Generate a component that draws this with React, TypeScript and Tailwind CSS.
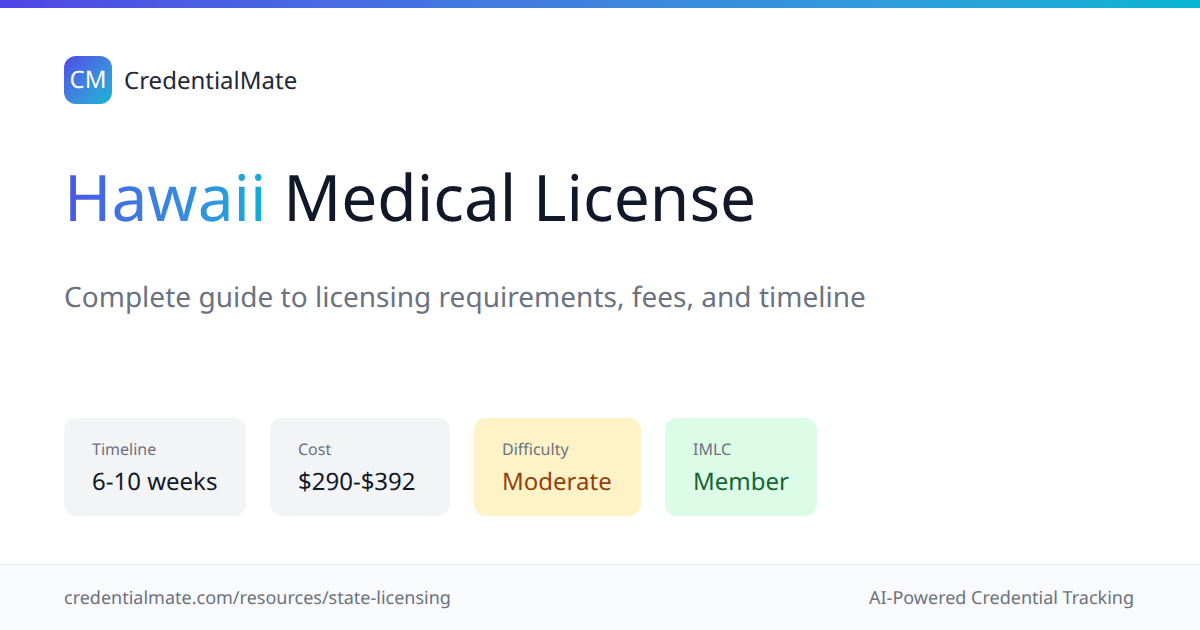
const stats = [
  { label: 'Timeline', value: '6-10 weeks', bg: 'bg-[#f3f4f6]', color: 'text-[#111827]', width: 'w-[182px]' },
  { label: 'Cost', value: '$290-$392', bg: 'bg-[#f3f4f6]', color: 'text-[#111827]', width: 'w-[180px]' },
  { label: 'Difficulty', value: 'Moderate', bg: 'bg-[#fef3c7]', color: 'text-[#92400e]', width: 'w-[167px]' },
  { label: 'IMLC', value: 'Member', bg: 'bg-[#dcfce7]', color: 'text-[#166534]', width: 'w-[152px]' },
];

export default function App() {
  return (
    <div className="w-[1200px] h-[630px] bg-white flex flex-col overflow-hidden antialiased [text-rendering:geometricPrecision] font-['Noto_Sans',sans-serif]">
      <div className="h-2 bg-gradient-to-r from-[#4f46e5] to-[#06b6d4]" />
      <div className="flex-1 flex flex-col px-16 pt-12">
        <div className="flex items-center gap-3">
          <div className="w-12 h-12 rounded-xl bg-gradient-to-br from-[#4f46e5] to-[#06b6d4] flex items-center justify-center text-white text-2xl">
            CM
          </div>
          <span className="pt-0.5 text-2xl text-[#1f2937]">CredentialMate</span>
        </div>
        <h1 className="mt-[49px] text-[64px] leading-[88px] text-[#111827]">
          <span className="bg-gradient-to-r from-[#4a55e4] to-[#0cadd8] bg-clip-text text-transparent">Hawaii</span> Medical License
        </h1>
        <p className="mt-[37px] text-[28px] leading-[38px] tracking-[0.02px] text-[#6b7280]">
          Complete guide to licensing requirements, fees, and timeline
        </p>
        <div className="mt-[102px] flex gap-6">
          {stats.map((s) => (
            <div key={s.label} className={`${s.bg} ${s.width} rounded-xl px-7 py-5 h-[98px]`}>
              <div className="text-base leading-[22px] text-[#6b7280]">{s.label}</div>
              <div className={`mt-1.5 text-2xl leading-8 ${s.color}`}>{s.value}</div>
            </div>
          ))}
        </div>
      </div>
      <div className="h-[66px] shrink-0 border-t border-[#e5e7eb] bg-[#f9fafb] pl-16 pr-[66px] flex items-center justify-between text-lg text-[#6b7280]">
        <span>credentialmate.com/resources/state-licensing</span>
        <span>AI-Powered Credential Tracking</span>
      </div>
    </div>
  );
}
